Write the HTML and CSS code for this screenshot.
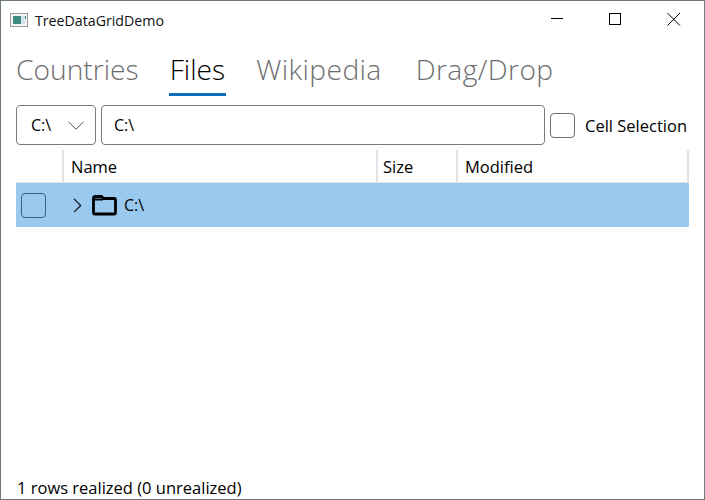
FILE: index.html
```html
<!DOCTYPE html>
<html>
<head>
<meta charset="utf-8">
<title>TreeDataGridDemo</title>
<link rel="stylesheet" href="styles.css">
</head>
<body>
<div class="window">
  <header class="titlebar">
    <svg class="app-icon" width="18" height="16" viewBox="0 0 18 16"><rect x="0.500" y="1.500" width="17" height="13" fill="#f4f4f4" stroke="#9a9a9a"/><rect x="3" y="4" width="8" height="8" fill="#3d8a80"/><rect x="11" y="4" width="4" height="8" fill="#d5e3ea"/><rect x="15" y="4" width="1" height="3" fill="#3d8a80"/></svg>
    <span class="title">TreeDataGridDemo</span>
    <div class="caption">
      <svg class="cap" width="59" height="38" viewBox="0 0 59 38"><path d="M24 17.500H36" stroke="#000" fill="none"/></svg>
      <svg class="cap" width="59" height="38" viewBox="0 0 59 38"><rect x="23.500" y="12.500" width="11" height="11" stroke="#000" fill="none"/></svg>
      <svg class="cap" width="59" height="38" viewBox="0 0 59 38"><path d="M22.500 12L35 24.500M35 12L22.500 24.500" stroke="#000" fill="none"/></svg>
    </div>
  </header>
  <nav class="tabs">
    <span class="tab">Countries</span>
    <span class="tab active">Files</span>
    <span class="tab wide">Wikipedia</span>
    <span class="tab wide last">Drag/Drop</span>
  </nav>
  <div class="toolbar">
    <div class="combo"><span>C:\</span><svg width="16" height="9" viewBox="0 0 16 9"><path d="M0.500 0.800L8 8.200L15.500 0.800" stroke="#555" fill="none"/></svg></div>
    <div class="path">C:\</div>
    <span class="check"></span>
    <span class="check-label">Cell Selection</span>
  </div>
  <div class="grid-head">
    <div class="hcell c0"></div>
    <div class="hcell c1">Name</div>
    <div class="hcell c2">Size</div>
    <div class="hcell c3">Modified</div>
  </div>
  <div class="row">
    <span class="row-check"></span>
    <svg class="chev" width="9" height="15" viewBox="0 0 9 15"><path d="M1 0.800L7.700 7.500L1 14.200" stroke="#111" fill="none" stroke-width="1.200"/></svg>
    <svg class="folder" width="25" height="21" viewBox="0 0 25 21"><path d="M1.500 17.500V3A1.500 1.500 0 0 1 3 1.500H9.500L11.500 3.500H22A1.500 1.500 0 0 1 23.500 5V17.500A1.500 1.500 0 0 1 22 19H3A1.500 1.500 0 0 1 1.500 17.500Z" fill="none" stroke="#000" stroke-width="2.800"/><path d="M1.500 4.500H11" stroke="#000" stroke-width="2"/></svg>
    <span class="row-text">C:\</span>
  </div>
  <div class="spacer"></div>
  <footer class="status">1 rows realized (0 unrealized)</footer>
</div>
</body>
</html>
```
FILE: styles.css
```css
* { box-sizing: border-box; }
html, body { margin: 0; padding: 0; background: #fff; }
body { font-family: "Open Sans", "Noto Sans", sans-serif; color: #000; }
.window { width: 705px; height: 500px; border: 1px solid #6f7a80; display: flex; flex-direction: column; overflow: hidden; }
.titlebar { height: 38px; display: flex; align-items: center; padding-left: 9px; flex: none; }
.app-icon { margin-right: 7px; }
.title { font-size: 14.200px; flex: 1; color: #111; }
.caption { display: flex; }
.cap { display: block; }
.tabs { height: 64px; flex: none; display: flex; gap: 29px; padding-left: 14px; }
.tab { font-size: 28.200px; font-weight: 300; color: #6e6e6e; line-height: 46px; padding: 7px 1px 0; height: 57px; border-bottom: 3px solid transparent; }
.active { color: #000; border-bottom-color: #0f6cbd; }
.wide { letter-spacing: 0.400px; }
.last { margin-left: 3px; }
.toolbar { display: flex; align-items: center; height: 44px; flex: none; padding-left: 15px; }
.combo { width: 80px; height: 40px; border: 1px solid #7a7a7a; border-radius: 4px; display: flex; align-items: center; justify-content: space-between; padding: 0 11px 0 14px; font-size: 16px; }
.path { width: 444px; height: 40px; margin-left: 5px; border: 1px solid #7a7a7a; border-radius: 4px; display: flex; align-items: center; padding-left: 12px; font-size: 16px; }
.check { width: 25px; height: 25px; margin-left: 5px; border: 1px solid #6e6e6e; border-radius: 4px; }
.check-label { font-size: 16.500px; margin-left: 10px; white-space: nowrap; }
.grid-head { margin-top: 3px; margin-left: 15px; width: 673px; height: 33px; display: flex; flex: none; border-bottom: 1px solid #e3e3e3; }
.hcell { border-right: 2px solid #e3e3e3; font-size: 16.500px; display: flex; align-items: center; }
.c0 { width: 48px; }
.c1 { width: 314px; padding-left: 7px; }
.c2 { width: 80px; padding-left: 5px; }
.c3 { width: 231px; padding-left: 7px; }
.row { margin-left: 15px; width: 673px; height: 44px; background: #99c9ef; display: flex; align-items: center; flex: none; }
.row-check { width: 25px; height: 25px; margin-left: 5px; border: 1px solid #3d5f78; border-radius: 4px; }
.chev { margin-left: 27px; }
.folder { margin-left: 10px; }
.row-text { font-size: 16px; margin-left: 7px; }
.spacer { flex: 1; }
.status { font-size: 16.500px; padding-left: 16px; height: 22px; line-height: 22px; flex: none; }
```
